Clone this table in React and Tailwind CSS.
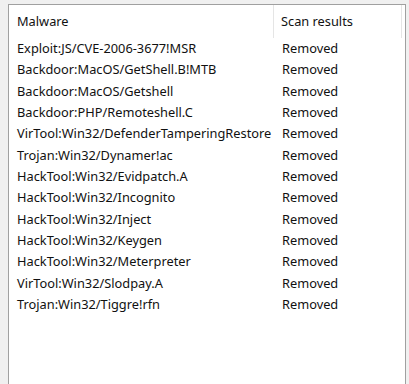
const rows = [
  "Exploit:JS/CVE-2006-3677!MSR",
  "Backdoor:MacOS/GetShell.B!MTB",
  "Backdoor:MacOS/Getshell",
  "Backdoor:PHP/Remoteshell.C",
  "VirTool:Win32/DefenderTamperingRestore",
  "Trojan:Win32/Dynamer!ac",
  "HackTool:Win32/Evidpatch.A",
  "HackTool:Win32/Incognito",
  "HackTool:Win32/Inject",
  "HackTool:Win32/Keygen",
  "HackTool:Win32/Meterpreter",
  "VirTool:Win32/Slodpay.A",
  "Trojan:Win32/Tiggre!rfn",
];

export default function App() {
  return (
    <div
      className="h-[384px] w-[409px] overflow-hidden bg-[#f0f0f0] pt-[4px] pl-[8px] pr-[3px] text-[12.8px] text-[#111]"
      style={{ fontFamily: '"Noto Sans", "Open Sans", sans-serif' }}
    >
      <div className="h-[400px] border border-[#a0a0a0] bg-white">
        {/* column headers */}
        <div className="flex h-[33px]">
          <div className="flex w-[265px] items-center border-r border-[#e5e5e5] pl-[8px]">
            Malware
          </div>
          <div className="flex w-[128px] items-center border-r border-[#e5e5e5] pl-[7px]">
            Scan results
          </div>
        </div>
        {rows.map((name) => (
          <div key={name} className="flex h-[21.33px] items-center">
            <div className="w-[265px] pl-[8px] whitespace-nowrap">{name}</div>
            <div className="pl-[8px]">Removed</div>
          </div>
        ))}
      </div>
    </div>
  );
}
